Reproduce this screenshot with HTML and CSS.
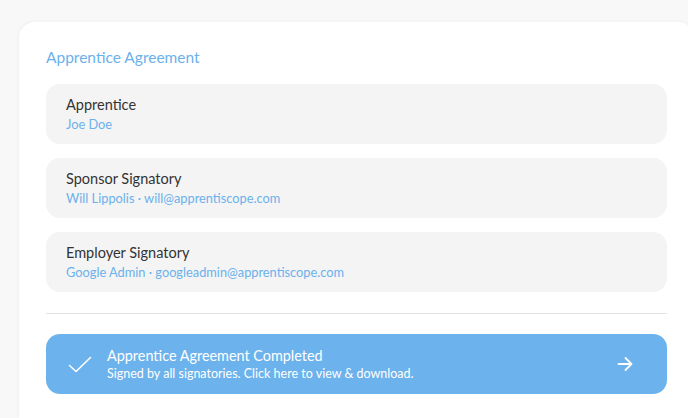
FILE: index.html
```html
<!DOCTYPE html>
<html>
<head>
<meta charset="utf-8">
<link rel="stylesheet" href="styles.css">
</head>
<body>
<div class="card">
  <h2 class="title">Apprentice Agreement</h2>
  <div class="items">
    <div class="item">
      <div class="item-label">Apprentice</div>
      <div class="item-sub">Joe Doe</div>
    </div>
    <div class="item">
      <div class="item-label">Sponsor Signatory</div>
      <div class="item-sub">Will Lippolis · will@apprentiscope.com</div>
    </div>
    <div class="item">
      <div class="item-label">Employer Signatory</div>
      <div class="item-sub">Google Admin · googleadmin@apprentiscope.com</div>
    </div>
  </div>
  <hr class="divider">
  <div class="done">
    <svg class="check" width="24" height="18" viewBox="0 0 24 18"><path d="M1.5 9.5 L8 15.5 L22.5 1.5" fill="none" stroke="#fff" stroke-width="1.6" stroke-linecap="round" stroke-linejoin="round"/></svg>
    <div class="done-text">
      <div class="done-title">Apprentice Agreement Completed</div>
      <div class="done-sub">Signed by all signatories. Click here to view &amp; download.</div>
    </div>
    <svg class="arrow" width="16" height="16" viewBox="0 0 16 16"><path d="M1.5 8 H14 M8.5 2 L14.5 8 L8.5 14" fill="none" stroke="#fff" stroke-width="1.8" stroke-linecap="round" stroke-linejoin="round"/></svg>
  </div>
</div>
</body>
</html>
```
FILE: styles.css
```css
html, body {
  margin: 0;
  padding: 0;
  background: #f8f8f8;
  overflow: hidden;
  width: 688px;
  height: 418px;
}
body {
  font-family: "Lato", "Open Sans", sans-serif;
  padding: 22px 0 0 19px;
  box-sizing: border-box;
}
.card {
  width: 675px;
  height: 396px;
  box-sizing: border-box;
  background: #fff;
  border-radius: 16px 16px 0 0;
  box-shadow: 0 0 4px rgba(0,0,0,0.05);
  padding: 25px 27px 0 27px;
}
.title {
  margin: 0 0 17px 0;
  font-weight: 400;
  font-size: 15.5px;
  line-height: 20px;
  color: #6bb1ec;
}
.items {
  display: flex;
  flex-direction: column;
  gap: 14px;
}
.item {
  background: #f4f4f4;
  border-radius: 14px;
  height: 60px;
  box-sizing: border-box;
  padding: 11px 20px 0 20px;
}
.item-label {
  font-size: 14.5px;
  line-height: 20px;
  color: #333;
}
.item-sub {
  font-size: 12.8px;
  line-height: 18px;
  color: #6bb1ec;
}
.divider {
  border: none;
  border-top: 1px solid #e3e3e3;
  margin: 21px 0 20px 0;
}
.done {
  background: #6cb2ec;
  border-radius: 14px;
  height: 60px;
  display: flex;
  align-items: center;
  padding: 0 34px 0 22px;
  color: #fff;
}
.check {
  flex: none;
  margin-right: 15px;
  margin-top: 2px;
}
.done-text {
  flex: 1;
}
.done-title {
  font-size: 14.4px;
  line-height: 19px;
}
.done-sub {
  font-size: 12.5px;
  line-height: 18px;
}
.arrow {
  flex: none;
}
```
